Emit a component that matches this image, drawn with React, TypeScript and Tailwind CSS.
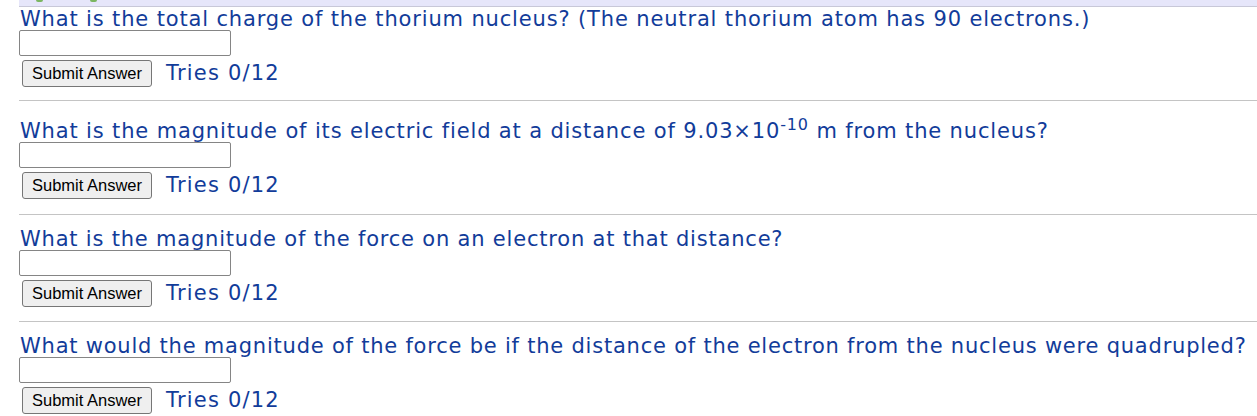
import React from "react";

const textCls =
  "whitespace-nowrap text-[21px] leading-[21px] h-[21px] text-[#123c9a] pl-px";
const fontStyle = "font-['DejaVu_Sans',Verdana,sans-serif]";

function Controls() {
  return (
    <>
      <div className="h-[26px] w-[212px] rounded-[2px] border border-[#858585] bg-white" />
      <div className="mt-[4px] flex h-[27px] items-center gap-[14px] pl-[3px]">
        <div className="flex h-[27px] w-[130px] items-center justify-center rounded-[3px] border border-[#767676] bg-[#efefef] font-['Liberation_Sans',Arial,sans-serif] text-[16.5px] text-black">
          Submit Answer
        </div>
        <span className={`text-[21px] tracking-[1.2px] leading-[27px] text-[#123c9a] ${fontStyle}`}>Tries 0/12</span>
      </div>
    </>
  );
}

function Hr({ mt }: { mt: string }) {
  return <div className={`${mt} h-px w-full bg-[#c4c4c4]`} />;
}

export default function App() {
  return (
    <div className={`w-[1257px] h-[416px] overflow-hidden bg-white ${fontStyle}`}>
      <div className="ml-[19px] flex h-[7px] items-start border-b border-[#c8c8d8] bg-[#e6e6fa]">
        <span className="ml-[17px] h-[2px] w-[7px] rounded-b bg-[#7bb661]" />
        <span className="ml-[47px] h-[2px] w-[7px] rounded-b bg-[#7bb661]" />
      </div>
      <div className="flex flex-col pl-[19px]">
        <div className={`mt-[2px] tracking-[0.85px] ${textCls}`}>
          What is the total charge of the thorium nucleus? (The neutral thorium atom has 90 electrons.)
        </div>
        <Controls />
        <Hr mt="mt-[13px]" />

        <div className={`mt-[14px] box-content pt-[6px] tracking-[0.85px] ${textCls}`}>
          What is the magnitude of its electric field at a distance of 9.03×10
          <span className="relative top-[-8px] text-[16px]">-10</span> m from the nucleus?
        </div>
        <Controls />
        <Hr mt="mt-[15px]" />

        <div className={`mt-[14px] tracking-[0.8px] ${textCls}`}>
          What is the magnitude of the force on an electron at that distance?
        </div>
        <Controls />
        <Hr mt="mt-[14px]" />

        <div className={`mt-[14px] tracking-[0.78px] ${textCls}`}>
          What would the magnitude of the force be if the distance of the electron from the nucleus were quadrupled?
        </div>
        <Controls />
      </div>
    </div>
  );
}
